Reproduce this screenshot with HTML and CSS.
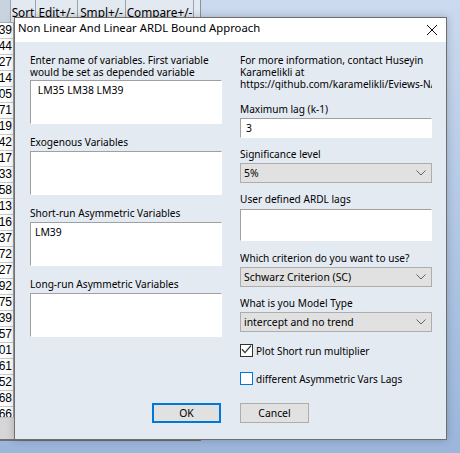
FILE: index.html
```html
<!DOCTYPE html>
<html>
<head>
<meta charset="utf-8">
<title>Non Linear And Linear ARDL Bound Approach</title>
<link rel="stylesheet" href="styles.css">
</head>
<body>
<div class="desktop">
  <div class="sheet">
    <div class="toolbar">
      <div class="corner"></div>
      <div class="tbtn tb-sort">Sort</div>
      <div class="tbtn tb-edit">Edit+/-</div>
      <div class="tbtn tb-smpl">Smpl+/-</div>
      <div class="tbtn tb-cmp">Compare+/-</div>
      <div class="tb-rest"></div>
    </div>
    <div class="cells">
      <div class="cell">39</div>
      <div class="cell">44</div>
      <div class="cell">27</div>
      <div class="cell">14</div>
      <div class="cell">05</div>
      <div class="cell">71</div>
      <div class="cell">19</div>
      <div class="cell">42</div>
      <div class="cell">17</div>
      <div class="cell">33</div>
      <div class="cell">58</div>
      <div class="cell">13</div>
      <div class="cell">16</div>
      <div class="cell">37</div>
      <div class="cell">72</div>
      <div class="cell">27</div>
      <div class="cell">92</div>
      <div class="cell">75</div>
      <div class="cell">39</div>
      <div class="cell">57</div>
      <div class="cell">01</div>
      <div class="cell">61</div>
      <div class="cell">52</div>
      <div class="cell">68</div>
      <div class="cell">66</div>
    </div>
    <div class="hscroll"></div>
  </div>

  <div class="dialog">
    <div class="titlebar">
      <span class="title">Non Linear And Linear ARDL Bound Approach</span>
      <svg class="close" width="12" height="12" viewBox="0 0 12 12">
        <path d="M1 1 L11 11 M11 1 L1 11" stroke="#111" stroke-width="1" fill="none"/>
      </svg>
    </div>
    <div class="dlg-body">
      <div class="col">
        <div class="label label-multi">Enter name of variables. First variable would be set as depended variable</div>
        <div class="textbox big"> LM35 LM38 LM39</div>
        <div class="label gap">Exogenous Variables</div>
        <div class="textbox big"></div>
        <div class="label gap">Short-run Asymmetric Variables</div>
        <div class="textbox big">LM39</div>
        <div class="label gap">Long-run Asymmetric Variables</div>
        <div class="textbox big"></div>
      </div>
      <div class="col">
        <div class="label info">For more information, contact Huseyin Karamelikli at <span class="nowrap">https://github.com/karamelikli/Eviews-NARDL</span></div>
        <div class="label r-maxlag">Maximum lag (k-1)</div>
        <div class="textbox small">3</div>
        <div class="label r-sig">Significance level</div>
        <div class="combo"><span>5%</span><svg class="chev" width="10" height="6" viewBox="0 0 10 6"><path d="M0.5 0.5 L5 5 L9.5 0.5" stroke="#606060" stroke-width="1" fill="none"/></svg></div>
        <div class="label r-user">User defined ARDL lags</div>
        <div class="textbox medium"></div>
        <div class="label r-crit">Which criterion do you want to use?</div>
        <div class="combo"><span>Schwarz Criterion (SC)</span><svg class="chev" width="10" height="6" viewBox="0 0 10 6"><path d="M0.5 0.5 L5 5 L9.5 0.5" stroke="#606060" stroke-width="1" fill="none"/></svg></div>
        <div class="label r-model">What is you Model Type</div>
        <div class="combo"><span>intercept and no trend</span><svg class="chev" width="10" height="6" viewBox="0 0 10 6"><path d="M0.5 0.5 L5 5 L9.5 0.5" stroke="#606060" stroke-width="1" fill="none"/></svg></div>
        <div class="check check-1">
          <span class="box checked"><svg width="11" height="11" viewBox="0 0 11 11"><path d="M1 4.2 L4 7.6 L10 0.6" stroke="#333" stroke-width="1.3" fill="none"/></svg></span>
          <span>Plot Short run multiplier</span>
        </div>
        <div class="check check-2">
          <span class="box hover"></span>
          <span>different Asymmetric Vars Lags</span>
        </div>
      </div>
      <div class="foot-left"><div class="btn btn-default">OK</div></div>
      <div class="foot-right"><div class="btn">Cancel</div></div>
    </div>
  </div>
</div>
</body>
</html>
```

FILE: styles.css
```css
html, body {
  margin: 0;
  padding: 0;
}
body {
  width: 460px;
  height: 453px;
  overflow: hidden;
  font-family: "Noto Sans", "DejaVu Sans", sans-serif;
}
.desktop {
  position: relative;
  width: 460px;
  height: 453px;
  overflow: hidden;
  background: linear-gradient(to bottom, #cbdaee 0%, #b3c9e6 45%, #9bb6db 100%);
}

/* background spreadsheet window */
.sheet {
  position: absolute;
  left: 0;
  top: 0;
  width: 200px;
  height: 439px;
  background: #ffffff;
  border-right: 1px solid #8a929c;
  border-bottom: 2px solid #707070;
  display: flex;
  flex-direction: column;
  overflow: hidden;
}
.toolbar {
  flex: none;
  height: 22px;
  display: flex;
  background: #e3e9f0;
  border-bottom: 1px solid #a6adb6;
}
.corner {
  width: 10px;
  background: #c9d3df;
}
.tbtn {
  border-left: 1px solid #9aa2ac;
  text-align: center;
  font-size: 11.8px;
  line-height: 16px;
  padding-top: 4px;
  color: #000;
  white-space: nowrap;
  overflow: hidden;
}
.tb-sort { width: 24px; }
.tb-edit { width: 41px; }
.tb-smpl { width: 47px; }
.tb-cmp { width: 67px; border-right: 1px solid #9aa2ac; }
.tb-rest { flex: 1; }
.cells {
  flex: none;
  width: 13px;
  border-right: 1px solid #a0a0a0;
}
.cell {
  height: 15px;
  border-bottom: 1px solid #c9c9c9;
  display: flex;
  justify-content: flex-end;
  overflow: hidden;
  font-family: "Liberation Sans", Arial, sans-serif;
  font-size: 12px;
  line-height: 15px;
  padding-right: 1px;
  color: #000;
}
.hscroll {
  position: absolute;
  left: 0;
  right: 0;
  bottom: 0;
  height: 21px;
  background: #d6d6d6;
  border-top: 1px solid #c4c4c4;
}

/* dialog */
.dialog {
  position: absolute;
  left: 14px;
  top: 17px;
  width: 433px;
  height: 423px;
  box-sizing: border-box;
  border: 1px solid #6e6e6e;
  background: #e4eaf2;
  box-shadow: 0 0 8px rgba(0, 0, 0, 0.22);
  display: flex;
  flex-direction: column;
}
.titlebar {
  flex: none;
  height: 24px;
  background: #ffffff;
  position: relative;
}
.title {
  display: block;
  padding-left: 3px;
  font-size: 11.3px;
  line-height: 20px;
  color: #000;
  white-space: nowrap;
}
.close {
  position: absolute;
  left: 411px;
  top: 6px;
}
.dlg-body {
  flex: 1;
  display: grid;
  grid-template-columns: 192px 192px;
  grid-template-rows: 349px 20px;
  column-gap: 18px;
  padding: 12px 14px 16px 15px;
  font-size: 10.1px;
  line-height: 12px;
  color: #000;
}
.col {
  display: flex;
  flex-direction: column;
  min-width: 0;
}
.label {
  white-space: nowrap;
  margin-bottom: 3px;
}
.label-multi {
  white-space: normal;
  margin-bottom: 2px;
}
.gap { margin-top: 12px; }
.info {
  white-space: normal;
  overflow: hidden;
  height: 36px;
  margin-bottom: 0;
}
.nowrap { white-space: nowrap; }
.r-maxlag { margin-top: 13px; }
.r-sig { margin-top: 10px; margin-bottom: 3px; }
.r-user { margin-top: 10px; margin-bottom: 4px; }
.r-crit { margin-top: 11px; }
.r-model { margin-top: 10px; }

.textbox {
  box-sizing: border-box;
  background: #ffffff;
  border-top: 1px solid #a0a0a0;
  border-left: 1px solid #a0a0a0;
  border-right: 1px solid #ffffff;
  border-bottom: 1px solid #ffffff;
  white-space: pre;
  padding: 3px 4px;
  font-size: 10.4px;
}
.big { height: 44px; }
.small { height: 20px; padding: 3px 5px; }
.medium { height: 32px; }

.combo {
  box-sizing: border-box;
  height: 20px;
  background: #e1e1e1;
  border: 1px solid #adadad;
  display: flex;
  align-items: center;
  justify-content: space-between;
  padding: 0 5px 0 3px;
  font-size: 10.4px;
}
.chev { display: block; }

.check {
  display: flex;
  align-items: center;
  gap: 3px;
  height: 13px;
  font-size: 10px;
}
.check-1 { margin-top: 12px; }
.check-2 { margin-top: 15px; }
.box {
  box-sizing: border-box;
  width: 13px;
  height: 13px;
  background: #ffffff;
  border: 1px solid #333333;
  display: flex;
  align-items: center;
  justify-content: center;
}
.box.hover { border-color: #0078d7; }

.foot-left {
  display: flex;
  justify-content: flex-end;
  padding-right: 1px;
}
.foot-right {
  display: flex;
  justify-content: flex-start;
}
.btn {
  box-sizing: border-box;
  width: 69px;
  height: 20px;
  background: #e1e1e1;
  border: 1px solid #adadad;
  text-align: center;
  line-height: 18px;
  font-size: 10.4px;
}
.btn-default {
  border: 2px solid #0078d7;
  line-height: 16px;
}
```
